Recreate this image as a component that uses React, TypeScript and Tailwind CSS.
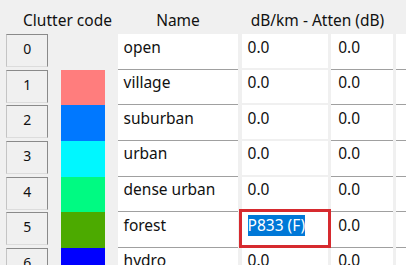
import React from "react";

const rows = [
  { code: "0", color: "", name: "open", db: "0.0", atten: "0.0" },
  { code: "1", color: "#ff7d7d", name: "village", db: "0.0", atten: "0.0" },
  { code: "2", color: "#0078ff", name: "suburban", db: "0.0", atten: "0.0" },
  { code: "3", color: "#00f7ff", name: "urban", db: "0.0", atten: "0.0" },
  { code: "4", color: "#00fa82", name: "dense urban", db: "0.0", atten: "0.0" },
  { code: "5", color: "#4caa00", name: "forest", db: "P833 (F)", atten: "0.0", sel: true },
  { code: "6", color: "#0000ff", name: "hydro", db: "0.0", atten: "0.0" },
];

export default function App() {
  return (
    <div
      className="w-[406px] h-[265px] overflow-hidden bg-[#f0f0f0] text-[#111111]"
      style={{ fontFamily: '"Noto Sans", "Open Sans", sans-serif' }}
    >
      <div className="h-[34px] flex items-start pt-[10px] text-[15.5px] leading-[21px] whitespace-nowrap">
        <div className="w-[135px] text-center">Clutter code</div>
        <div className="w-[86px] text-center">Name</div>
        <div className="ml-[8px] w-[177px] text-center">dB/km - Atten (dB)</div>
      </div>
      {rows.map((r) => (
        <div key={r.code} className="h-[35.67px] flex relative">
          <div className="ml-[6px] w-[43px] h-[33px] bg-[#f0f0f0] border-t border-t-[#8a8a8a] border-r border-r-[#8a8a8a] border-l border-l-[#c4c4c4] border-b border-b-[#dcdcdc] text-center text-[14px] leading-[19px] pt-[4px]">
            {r.code}
          </div>
          <div className="ml-[13px] w-[44px] h-full" style={{ backgroundColor: r.color || "transparent" }} />
          <div className="ml-[13px] w-[122px] h-full bg-white border-b border-b-[#a0a0a0] pl-[6px] pt-[2.5px] text-[15.5px] leading-[21px] whitespace-nowrap">
            {r.name}
          </div>
          <div
            className={
              "ml-[4px] w-[88px] bg-white pl-[6px] pt-[2.5px] text-[15.5px] leading-[21px] whitespace-nowrap " +
              (r.sel ? "outline-[3px] outline-solid outline-[#d62a2f] h-[33px]" : "h-[calc(100%-2px)]")
            }
          >
            {r.sel ? (
              <span className="bg-[#0078d7] text-white inline-block">{r.db}</span>
            ) : (
              r.db
            )}
          </div>
          <div className="ml-[3px] w-[63px] h-full bg-white border-b border-b-[#a0a0a0] pl-[7px] pt-[2.5px] text-[15.5px] leading-[21px] whitespace-nowrap">
            {r.atten}
          </div>
          <div className="ml-[3px] w-[10px] h-full bg-white border-b border-b-[#a0a0a0]" />
        </div>
      ))}
    </div>
  );
}
